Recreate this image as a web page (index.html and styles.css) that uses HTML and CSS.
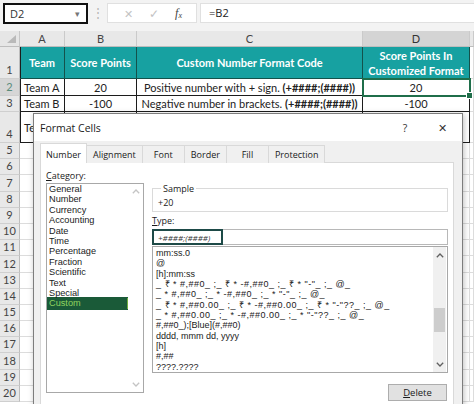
FILE: index.html
```html
<!DOCTYPE html>
<html>
<head>
<meta charset="utf-8">
<link rel="stylesheet" href="styles.css">
</head>
<body>
<div class="fbar">
  <div class="namebox"><span>D2</span><span class="caret">&#9662;</span></div>
  <div class="grip">&#8942;</div>
  <div class="fbtns"><span class="x">&#10005;</span><span class="ok">&#10003;</span><span class="fx">f<sub>x</sub></span></div>
  <div class="formula">=B2</div>
</div>
<div class="sheet">
  <div class="corner"></div><div class="ch">A</div><div class="ch">B</div><div class="ch">C</div><div class="ch csel">D</div><div class="ch"></div>

  <div class="rh">1</div><div class="th first">Team</div><div class="th">Score Points</div><div class="th">Custom Number Format Code</div><div class="th">Score Points In<br>Customized Format</div><div class="c"></div>

  <div class="rh rsel">2</div><div class="t first left">Team A</div><div class="t">20</div><div class="t"><span>Positive number with + sign. <b>(+####;(####))</b></span></div><div class="t active">20</div><div class="c"></div>

  <div class="rh">3</div><div class="t first left">Team B</div><div class="t">-100</div><div class="t"><span>Negative number in brackets. <b>(+####;(####))</b></span></div><div class="t">-100</div><div class="c"></div>

  <div class="rh">4</div><div class="t first left">Te</div><div class="t"></div><div class="t"></div><div class="t"></div><div class="c"></div>

  <div class="rh">5</div><div class="c"></div><div class="c"></div><div class="c"></div><div class="c"></div><div class="c"></div>
  <div class="rh">6</div><div class="c"></div><div class="c"></div><div class="c"></div><div class="c"></div><div class="c"></div>
  <div class="rh">7</div><div class="c"></div><div class="c"></div><div class="c"></div><div class="c"></div><div class="c"></div>
  <div class="rh">8</div><div class="c"></div><div class="c"></div><div class="c"></div><div class="c"></div><div class="c"></div>
  <div class="rh">9</div><div class="c"></div><div class="c"></div><div class="c"></div><div class="c"></div><div class="c"></div>
  <div class="rh">10</div><div class="c"></div><div class="c"></div><div class="c"></div><div class="c"></div><div class="c"></div>
  <div class="rh">11</div><div class="c"></div><div class="c"></div><div class="c"></div><div class="c"></div><div class="c"></div>
  <div class="rh">12</div><div class="c"></div><div class="c"></div><div class="c"></div><div class="c"></div><div class="c"></div>
  <div class="rh">13</div><div class="c"></div><div class="c"></div><div class="c"></div><div class="c"></div><div class="c"></div>
  <div class="rh">14</div><div class="c"></div><div class="c"></div><div class="c"></div><div class="c"></div><div class="c"></div>
  <div class="rh">15</div><div class="c"></div><div class="c"></div><div class="c"></div><div class="c"></div><div class="c"></div>
  <div class="rh">16</div><div class="c"></div><div class="c"></div><div class="c"></div><div class="c"></div><div class="c"></div>
  <div class="rh">17</div><div class="c"></div><div class="c"></div><div class="c"></div><div class="c"></div><div class="c"></div>
  <div class="rh">18</div><div class="c"></div><div class="c"></div><div class="c"></div><div class="c"></div><div class="c"></div>
  <div class="rh">19</div><div class="c"></div><div class="c"></div><div class="c"></div><div class="c"></div><div class="c"></div>
  <div class="rh">20</div><div class="c"></div><div class="c"></div><div class="c"></div><div class="c"></div><div class="c"></div>
</div>

<div class="dialog">
  <div class="dtitle"><span class="dname">Format Cells</span><span class="help">?</span><span class="close">&#10005;</span></div>
  <div class="dbody">
    <div class="tabs">
      <div class="tab on">Number</div><div class="tab">Alignment</div><div class="tab">Font</div><div class="tab">Border</div><div class="tab">Fill</div><div class="tab">Protection</div>
    </div>
    <div class="panel">
      <div class="lcol">
        <div class="lbl"><u>C</u>ategory:</div>
        <div class="catlist">
          <div class="items">
            <div>General</div>
            <div>Number</div>
            <div>Currency</div>
            <div>Accounting</div>
            <div>Date</div>
            <div>Time</div>
            <div>Percentage</div>
            <div>Fraction</div>
            <div>Scientific</div>
            <div>Text</div>
            <div>Special</div>
            <div class="hl">Custom</div>
          </div>
          <div class="vscroll faint">
            <svg class="up" width="8" height="5" viewBox="0 0 8 5"><polyline points="0.8,4.3 4,1 7.2,4.3" fill="none" stroke="#c4c4c4" stroke-width="1.3"/></svg>
            <svg class="dn" width="8" height="5" viewBox="0 0 8 5"><polyline points="0.8,0.7 4,4 7.2,0.7" fill="none" stroke="#c4c4c4" stroke-width="1.3"/></svg>
          </div>
        </div>
      </div>
      <div class="rcol">
        <fieldset class="sample"><legend>Sample</legend><div class="sval">+20</div></fieldset>
        <div class="lbl tlbl"><u>T</u>ype:</div>
        <div class="typebox"><span class="typeval">+####;(####)</span></div>
        <div class="fmtlist">
          <div class="items">
            <div>mm:ss.0</div>
            <div>@</div>
            <div>[h]:mm:ss</div>
            <div class="wide">_ &#8377; * #,##0_ ;_ &#8377; * -#,##0_ ;_ &#8377; * "-"_ ;_ @_</div>
            <div class="wide">_ * #,##0_ ;_ * -#,##0_ ;_ * "-"_ ;_ @_</div>
            <div class="wide">_ &#8377; * #,##0.00_ ;_ &#8377; * -#,##0.00_ ;_ &#8377; * "-"??_ ;_ @_</div>
            <div class="wide">_ * #,##0.00_ ;_ * -#,##0.00_ ;_ * "-"??_ ;_ @_</div>
            <div>#,##0_);[Blue](#,##0)</div>
            <div>dddd, mmm dd, yyyy</div>
            <div>[h]</div>
            <div>#,##</div>
            <div>????.????</div>
          </div>
          <div class="vscroll">
            <svg class="up" width="8" height="5" viewBox="0 0 8 5"><polyline points="0.8,4.3 4,1 7.2,4.3" fill="none" stroke="#606060" stroke-width="1.3"/></svg>
            <span class="thumb"></span>
            <svg class="dn" width="8" height="5" viewBox="0 0 8 5"><polyline points="0.8,0.7 4,4 7.2,0.7" fill="none" stroke="#606060" stroke-width="1.3"/></svg>
          </div>
        </div>
        <div class="btnrow"><div class="btn"><u>D</u>elete</div></div>
      </div>
    </div>
  </div>
</div>
</body>
</html>
```
FILE: styles.css
```css
* { box-sizing: border-box; margin: 0; padding: 0; }
body {
  margin: 0;
  width: 474px;
  height: 404px;
  overflow: hidden;
  background: #fff;
  font-family: "Open Sans", "Liberation Sans", sans-serif;
  position: relative;
  color: #1e1e1e;
}

/* formula bar */
.fbar {
  height: 31px;
  background: #f3f3f3;
  display: flex;
  align-items: flex-start;
  padding: 3px 0 0 3px;
}
.namebox {
  width: 85px;
  height: 21px;
  border: 2px solid #111;
  background: #fff;
  display: flex;
  align-items: center;
  justify-content: space-between;
  padding: 0 6px 0 5px;
  font-size: 11px;
  color: #333;
}
.caret { font-size: 9px; color: #777; }
.grip {
  width: 19px;
  height: 20px;
  text-align: center;
  color: #b5b5b5;
  font-size: 12px;
  line-height: 20px;
}
.fbtns {
  width: 90px;
  height: 20px;
  background: #fff;
  border: 1px solid #e0e0e0;
  display: flex;
  align-items: center;
  justify-content: space-around;
  padding: 0 6px 0 8px;
}
.fbtns .x { color: #c3c3c3; font-size: 11px; }
.fbtns .ok { color: #c3c3c3; font-size: 12px; }
.fbtns .fx {
  font-family: "Liberation Serif", serif;
  font-style: italic;
  font-size: 12px;
  color: #444;
}
.fbtns .fx sub { font-size: 8px; vertical-align: -1px; }
.formula {
  flex: 1;
  height: 20px;
  margin-left: 3px;
  background: #fff;
  border: 1px solid #e0e0e0;
  border-right: none;
  padding-left: 8px;
  font-size: 11px;
  line-height: 18px;
  color: #222;
}

/* sheet */
.sheet {
  display: grid;
  grid-template-columns: 20px 45px 72px 226px 107px 4px;
  grid-template-rows: 16px 32px 17px 16px 31px repeat(16, 16.2px);
  font-family: Lato, "Open Sans", sans-serif;
  font-size: 11px;
}
.corner {
  background: #e6e6e6;
  border-right: 1px solid #c6c6c6;
  border-bottom: 1px solid #bdbdbd;
  position: relative;
}
.corner::after {
  content: "";
  position: absolute;
  right: 3px;
  bottom: 3px;
  border-left: 9px solid transparent;
  border-bottom: 8px solid #b9b9b9;
}
.ch {
  background: #e8e8e8;
  border-right: 1px solid #cacaca;
  border-bottom: 1px solid #bdbdbd;
  text-align: center;
  line-height: 15px;
  color: #444;
}
.ch.csel { background: #d4d4d4; color: #333; }
.rh {
  background: #e8e8e8;
  border-right: 1px solid #bdbdbd;
  border-bottom: 1px solid #cfcfcf;
  display: flex;
  align-items: flex-end;
  justify-content: center;
  color: #444;
  line-height: 14px;
  padding-bottom: 1px;
}
.rh.rsel { background: #d6d6d6; color: #5b8d7c; }
.c {
  border-right: 1px solid #dcdcdc;
  border-bottom: 1px solid #dcdcdc;
}
.th {
  background: #17a1a1;
  color: #fff;
  font-weight: bold;
  display: flex;
  align-items: center;
  justify-content: center;
  text-align: center;
  line-height: 15px;
  border-right: 1px solid #14524c;
  border-bottom: 1px solid #14524c;
}
.t {
  border-right: 1px solid #1c1c1c;
  border-bottom: 1px solid #1c1c1c;
  display: flex;
  align-items: center;
  justify-content: center;
  white-space: nowrap;
  overflow: hidden;
  color: #222;
}
.first { box-shadow: inset 1px 0 0 #1c1c1c; }
.t.left { justify-content: flex-start; padding-left: 4px; }
.t b { font-weight: bold; }
.active {
  position: relative;
  overflow: visible;
  outline: 2px solid #1f6e4a;
  outline-offset: -1px;
}
.active::after {
  content: "";
  position: absolute;
  right: -4px;
  bottom: -4px;
  width: 5px;
  height: 5px;
  background: #1f6e4a;
  border: 1px solid #fff;
}

/* dialog */
.dialog {
  position: absolute;
  left: 33px;
  top: 113px;
  width: 430px;
  height: 300px;
  background: #f0f0f0;
  border: 1px solid #7d7d7d;
  box-shadow: 1px 1px 6px rgba(0,0,0,0.25);
  font-size: 9px;
  color: #1a1a1a;
}
.dtitle {
  height: 27px;
  background: #fff;
  display: flex;
  align-items: center;
  padding: 0 12px 0 6px;
  font-size: 10.5px;
}
.dname { flex: 1; }
.help { width: 16px; text-align: center; font-size: 10.5px; margin-right: 21px; color: #333; }
.close { width: 16px; text-align: center; font-size: 11px; color: #333; }
.dbody { padding: 2px 8px 0 6px; }
.tabs {
  display: flex;
  align-items: flex-end;
  height: 20px;
  position: relative;
  z-index: 1;
}
.tab {
  height: 18px;
  min-width: 43px;
  padding: 0 6px;
  border: 1px solid #d9d9d9;
  border-bottom: none;
  margin-left: -1px;
  background: #f0f0f0;
  text-align: center;
  line-height: 17px;
}
.tab.on {
  height: 20px;
  margin-left: 0;
  width: 47px;
  min-width: 0;
  padding: 0;
  background: #fff;
  line-height: 21px;
}
.panel {
  margin-top: -1px;
  height: 260px;
  background: #fff;
  border: 1px solid #d9d9d9;
  padding: 7px 5px 0 5px;
  display: flex;
  gap: 8px;
}
.lcol { width: 98px; }
.lbl { line-height: 12px; height: 12px; }
.catlist {
  margin-top: 1px;
  height: 210px;
  border: 1px solid #a8a8a8;
  display: flex;
  background: #fff;
}
.items { flex: 1; font-family: "Liberation Sans", Arial, sans-serif; font-size: 9.2px; }
.catlist .items div { line-height: 10.4px; height: 10.4px; padding-left: 2px; white-space: nowrap; }
.catlist .items .hl {
  background: #1a5a38;
  color: #8fd45e;
  box-shadow: 0 1px 0 #1a5a38, 0 -1px 0 #1a5a38;
  margin-right: 1px;
  border-right: 1px solid #6fae3f;
}
.vscroll {
  width: 14px;
  display: flex;
  flex-direction: column;
  align-items: center;
  justify-content: space-between;
  padding: 5px 0 6px;
}
.vscroll.faint { padding: 5px 0 5px; }
.rcol { width: 296px; padding-top: 12px; }
.sample {
  border: 1px solid #dadada;
  height: 30px;
  padding: 0 5px 2px;
  margin: 0;
}
.sample legend {
  padding: 0 2px;
  margin-left: 3px;
  line-height: 13px;
}
.sval { line-height: 12px; padding-top: 2px; }
.tlbl { margin-top: 3px; }
.typebox {
  margin-top: 2px;
  height: 16px;
  border: 1px solid #b8b8b8;
  display: flex;
}
.typeval {
  margin: -1px 0 -1px -1px;
  border: 2px solid #1d4a47;
  padding: 0 4px;
  font-style: italic;
  font-size: 8px;
  line-height: 13px;
  width: 71px;
  color: #333;
}
.fmtlist {
  margin-top: 1px;
  height: 127px;
  border: 1px solid #a8a8a8;
  display: flex;
}
.fmtlist .items { padding-top: 1px; padding-left: 3px; font-size: 9px; }
.fmtlist .items div { line-height: 10.33px; height: 10.33px; white-space: nowrap; }
.fmtlist .items .wide { letter-spacing: 0.5px; }
.fmtlist .vscroll {
  width: 13px;
  margin-right: 1px;
  background: #f0f0f0;
  padding: 6px 0 5px;
  justify-content: flex-start;
}
.fmtlist .thumb {
  width: 11px;
  height: 24px;
  background: #cdcdcd;
  margin-top: 50px;
  margin-bottom: auto;
}
.btnrow { display: flex; justify-content: flex-end; margin-top: 11px; padding-right: 1px; }
.btn {
  width: 59px;
  height: 17px;
  background: #e1e1e1;
  border: 1px solid #adadad;
  text-align: center;
  line-height: 15px;
  font-size: 9.5px;
}
```
